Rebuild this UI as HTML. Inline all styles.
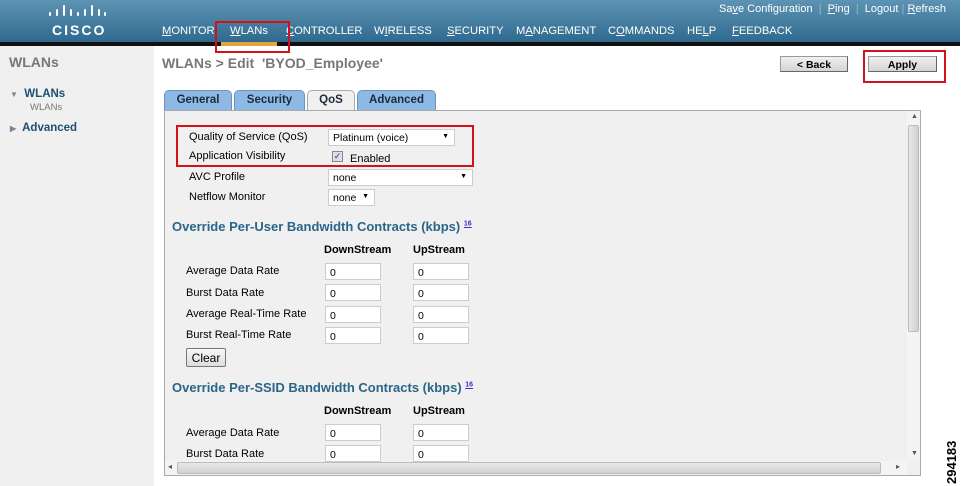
<!DOCTYPE html>
<html><head><style>
*{margin:0;padding:0;box-sizing:border-box}
body{width:977px;height:486px;background:#fff;font-family:"Liberation Sans",sans-serif;position:relative;overflow:hidden}
.a{position:absolute;white-space:nowrap}
#hdr{left:0;top:0;width:960px;height:42px;background:linear-gradient(#5d93b3,#2f6a8e)}
#blk{left:0;top:42px;width:960px;height:4px;background:#111}
.nav{top:25px;color:#fff;font-size:11.2px}
.nav u{text-decoration:underline}
.tl{top:3px;color:#fff;font-size:11px}
#side{left:0;top:46px;width:154px;height:440px;background:#f0f0f0}
.lbl{font-size:11px;color:#000}
.inp{position:absolute;background:#fff;border:1px solid #ccc;font-size:10.5px;padding:3px 4px;height:17px;width:56px}
.sel{position:absolute;background:#fff;border:1px solid #ccc;font-size:10.5px;padding:2px 4px;height:17px}
.sel:after{content:"▼";position:absolute;right:5px;top:3px;font-size:7px}
.h{font-weight:bold;color:#2a6587;font-size:13px}
.tab{position:absolute;top:90px;height:20px;background:#8fb9e5;border:1px solid #6b93bd;border-bottom:none;border-radius:5px 5px 0 0;font-weight:bold;font-size:11.5px;color:#1c2b3c;text-align:center;padding-top:3px}
.red{position:absolute;border:2.5px solid #d2121a}
.btn{position:absolute;background:linear-gradient(#f0f0f0,#d4d4d4);border:1px solid #999;border-right-color:#666;border-bottom-color:#666;font-weight:bold;font-size:10.5px;text-align:center;padding-top:2px}
.bh{font-size:11px;font-weight:bold}
</style></head><body>
<div class="a" id="hdr"></div><div class="a" id="blk"></div>
<div class="a" style="left:48px;top:5px">
<svg width="58" height="14" viewBox="0 0 58 14"><g fill="#fff"><rect x="1" y="7" width="2" height="4" rx="1"/><rect x="8" y="4" width="2" height="7" rx="1"/><rect x="15" y="0" width="2" height="11" rx="1"/><rect x="22" y="4" width="2" height="7" rx="1"/><rect x="29" y="7" width="2" height="4" rx="1"/><rect x="36" y="4" width="2" height="7" rx="1"/><rect x="43" y="0" width="2" height="11" rx="1"/><rect x="50" y="4" width="2" height="7" rx="1"/><rect x="56" y="7" width="2" height="4" rx="1"/></g></svg></div>
<div class="a" style="left:52px;top:22px;color:#fff;font-weight:bold;font-size:14px;letter-spacing:2px">CISCO</div>
<div class="a nav" style="left:162px"><u>M</u>ONITOR</div>
<div class="a nav" style="left:230px"><u>W</u>LANs</div>
<div class="a" style="left:221px;top:42px;width:56px;height:4px;background:#e7a33b"></div>
<div class="a nav" style="left:286px"><u>C</u>ONTROLLER</div>
<div class="a nav" style="left:374px">W<u>I</u>RELESS</div>
<div class="a nav" style="left:447px"><u>S</u>ECURITY</div>
<div class="a nav" style="left:516px">M<u>A</u>NAGEMENT</div>
<div class="a nav" style="left:608px">C<u>O</u>MMANDS</div>
<div class="a nav" style="left:687px">HE<u>L</u>P</div>
<div class="a nav" style="left:732px"><u>F</u>EEDBACK</div>
<div class="a tl" style="left:719px">Sa<u>v</u>e Configuration &nbsp;<span style="color:#9bb">|</span>&nbsp; <u>P</u>ing &nbsp;<span style="color:#9bb">|</span>&nbsp; Lo<u>g</u>out <span style="color:#9bb">|</span> <u>R</u>efresh</div>
<div class="red" style="left:215px;top:21px;width:75px;height:32px"></div>
<div class="a" id="side"></div>
<div class="a" style="left:9px;top:54px;font-size:14px;font-weight:bold;color:#777">WLANs</div>
<div class="a" style="left:10px;top:88px;font-size:11.5px;font-weight:bold;color:#1d4f70"><span style="color:#789;font-size:8px">▼</span>&nbsp; WLANs</div>
<div class="a" style="left:30px;top:102px;font-size:9.5px;color:#777">WLANs</div>
<div class="a" style="left:10px;top:122px;font-size:11.5px;font-weight:bold;color:#1d4f70"><span style="color:#789;font-size:8px">▶</span>&nbsp; Advanced</div>
<div class="a" style="left:162px;top:55px;font-size:14px;font-weight:bold;color:#777">WLANs &gt; Edit &nbsp;'BYOD_Employee'</div>
<div class="btn" style="left:780px;top:56px;width:68px;height:16px">&lt; Back</div>
<div class="btn" style="left:868px;top:56px;width:69px;height:16px">Apply</div>
<div class="red" style="left:863px;top:50px;width:83px;height:33px"></div>
<div class="tab" style="left:164px;width:68px">General</div>
<div class="tab" style="left:234px;width:71px">Security</div>
<div class="tab" style="left:307px;width:48px;background:#f0f0f0;height:21px;border-color:#aaa">QoS</div>
<div class="tab" style="left:357px;width:79px">Advanced</div>
<div class="a" style="left:164px;top:110px;width:757px;height:366px;background:#f0f0f0;border:1px solid #aaa"></div>
<div class="a" style="left:907px;top:111px;width:13px;height:350px;background:#f4f4f4"></div>
<div class="a" style="left:908px;top:125px;width:11px;height:207px;background:linear-gradient(90deg,#e8e8e8,#d0d0d0);border:1px solid #bbb;border-radius:2px"></div>
<div class="a" style="left:911px;top:113px;font-size:7px;color:#555">▲</div>
<div class="a" style="left:911px;top:450px;font-size:7px;color:#555">▼</div>
<div class="a" style="left:165px;top:461px;width:742px;height:14px;background:#f4f4f4"></div>
<div class="a" style="left:177px;top:462px;width:704px;height:12px;background:linear-gradient(#e8e8e8,#d0d0d0);border:1px solid #bbb;border-radius:2px"></div>
<div class="a" style="left:168px;top:462px;font-size:8px;color:#555">◂</div>
<div class="a" style="left:896px;top:462px;font-size:8px;color:#555">▸</div>
<div class="a lbl" style="left:189px;top:131px">Quality of Service (QoS)</div>
<div class="sel" style="left:328px;top:129px;width:127px">Platinum (voice)</div>
<div class="a lbl" style="left:189px;top:150px">Application Visibility</div>
<div class="a" style="left:332px;top:151px;width:11px;height:11px;border:1px solid #888;background:#dde;font-size:9px;line-height:9px;text-align:center;color:#335">✓</div>
<div class="a lbl" style="left:350px;top:153px">Enabled</div>
<div class="red" style="left:176px;top:125px;width:298px;height:42px"></div>
<div class="a lbl" style="left:189px;top:171px">AVC Profile</div>
<div class="sel" style="left:328px;top:169px;width:145px">none</div>
<div class="a lbl" style="left:189px;top:191px">Netflow Monitor</div>
<div class="sel" style="left:328px;top:189px;width:47px">none</div>
<div class="a h" style="left:172px;top:219px">Override Per-User Bandwidth Contracts (kbps) <sup style="font-size:7px;color:#33c;text-decoration:underline">16</sup></div>
<div class="a bh" style="left:324px;top:244px">DownStream</div>
<div class="a bh" style="left:413px;top:244px">UpStream</div>
<div class="a lbl" style="left:186px;top:265px">Average Data Rate</div>
<div class="inp" style="left:325px;top:263px">0</div><div class="inp" style="left:413px;top:263px">0</div>
<div class="a lbl" style="left:186px;top:287px">Burst Data Rate</div>
<div class="inp" style="left:325px;top:284px">0</div><div class="inp" style="left:413px;top:284px">0</div>
<div class="a lbl" style="left:186px;top:308px">Average Real-Time Rate</div>
<div class="inp" style="left:325px;top:306px">0</div><div class="inp" style="left:413px;top:306px">0</div>
<div class="a lbl" style="left:186px;top:329px">Burst Real-Time Rate</div>
<div class="inp" style="left:325px;top:327px">0</div><div class="inp" style="left:413px;top:327px">0</div>
<div class="a" style="left:186px;top:348px;width:40px;height:19px;border:1px solid #777;border-radius:2px;background:linear-gradient(#f8f8f8,#ddd);font-size:12px;text-align:center;padding-top:2px">Clear</div>
<div class="a h" style="left:172px;top:380px">Override Per-SSID Bandwidth Contracts (kbps) <sup style="font-size:7px;color:#33c;text-decoration:underline">16</sup></div>
<div class="a bh" style="left:324px;top:405px">DownStream</div>
<div class="a bh" style="left:413px;top:405px">UpStream</div>
<div class="a lbl" style="left:186px;top:427px">Average Data Rate</div>
<div class="inp" style="left:325px;top:424px">0</div><div class="inp" style="left:413px;top:424px">0</div>
<div class="a lbl" style="left:186px;top:448px">Burst Data Rate</div>
<div class="inp" style="left:325px;top:445px">0</div><div class="inp" style="left:413px;top:445px">0</div>
<div class="a" style="left:944px;top:484px;transform:rotate(-90deg);transform-origin:left top;font-size:13px;font-weight:bold">294183</div>
</body></html>
